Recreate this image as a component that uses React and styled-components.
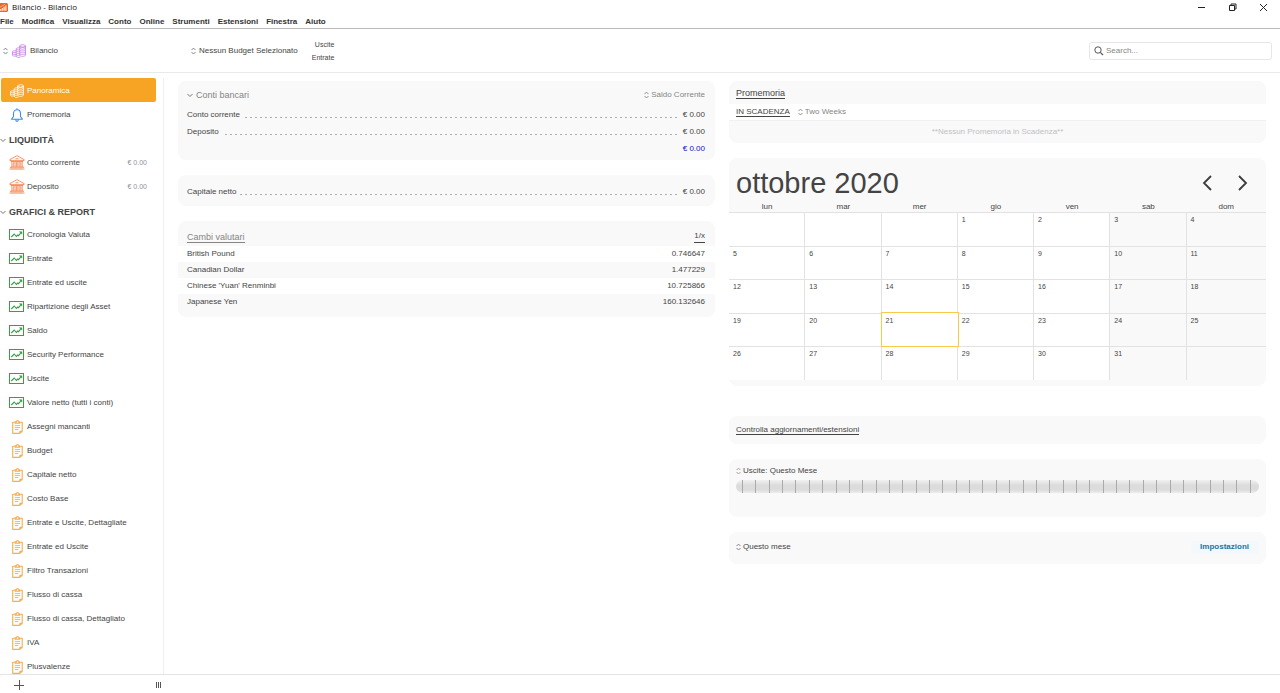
import React from "react";
import styled, { createGlobalStyle } from "styled-components";

const GlobalStyle = createGlobalStyle`
  *, *::before, *::after { box-sizing: border-box; }
  body {
    margin: 0;
    background: #fff;
    color: #444;
    font: 8px/16px "Liberation Sans", Arial, sans-serif;
  }
  button, input, select { font: inherit; color: inherit; }
  h1, h2 { margin: 0; font-weight: 400; }
  table { border-collapse: separate; border-spacing: 0; width: 100%; }
  td, th { padding: 0; font-weight: 400; }
`;

const Window = styled.div`
  display: flex;
  flex-direction: column;
  height: 100vh;
  overflow: hidden;
`;

const PlainButton = styled.button`
  display: flex;
  align-items: center;
  justify-content: center;
  padding: 0;
  border: 0;
  background: none;
  cursor: pointer;
`;

const TitleBar = styled.header`
  display: flex;
  align-items: center;
  justify-content: space-between;
  height: 14px;
  padding-right: 12px;
`;

const Title = styled.h1`
  display: flex;
  align-items: center;
  gap: 4px;
  color: #111;
  font: 500 8px/14px "Open Sans", "Noto Sans", sans-serif;
`;

const WindowButtons = styled.div`
  display: flex;
  gap: 22px;
`;

const MenuBar = styled.nav`
  display: flex;
  gap: 8px;
  height: 15px;
  border-bottom: 1px solid #b9b9b9;
`;

const MenuItem = styled(PlainButton)`
  color: #333;
  font-weight: 700;
  line-height: 15px;
`;

const Toolbar = styled.div`
  display: flex;
  align-items: center;
  height: 44px;
  padding: 1px 8px 0 3px;
  border-bottom: 1px solid #e9e9e9;
`;

const FileSlot = styled.div`
  width: 188px;
`;

const BudgetLegend = styled.div`
  display: flex;
  flex-direction: column;
  margin: 0 auto 0 14px;
  font-size: 7px;
  line-height: 13px;
  text-align: right;
`;

const SearchBox = styled.label`
  display: flex;
  align-items: center;
  gap: 2px;
  width: 183px;
  height: 18px;
  padding: 0 4px;
  border: 1px solid #e6e6e6;
  border-radius: 3px;
`;

const SearchInput = styled.input`
  flex: 1;
  min-width: 0;
  padding: 0;
  border: 0;
  outline: 0;
  background: none;
  &::placeholder { color: #858585; opacity: 1; }
`;

const PickerLabel = styled.label`
  display: flex;
  align-items: center;
  gap: ${(p) => p.$gap || 2}px;
  color: ${(p) => p.$color || "inherit"};
`;

const PickerSelect = styled.select`
  appearance: none;
  field-sizing: content;
  height: 16px;
  padding: 0;
  border: 0;
  background: none;
  line-height: 16px;
  cursor: pointer;
`;

const Body = styled.div`
  display: flex;
  flex: 1;
  min-height: 0;
`;

const Sidebar = styled.nav`
  flex: none;
  width: 164px;
  margin-top: 5px;
  overflow: hidden;
  border-right: 1px solid #efefef;
`;

const NavRow = styled.a`
  display: flex;
  align-items: center;
  gap: 2px;
  height: 24px;
  margin: 0 7px 0 1px;
  padding: 1px 9px 0 8px;
  border-radius: 2px;
  background: ${(p) => (p.$active ? "#f7a323" : "transparent")};
  color: ${(p) => (p.$active ? "#fff" : "#444")};
  text-decoration: none;
`;

const NavIcon = styled.span`
  display: flex;
  justify-content: center;
  width: 16px;
`;

const NavAmount = styled.span`
  margin-left: auto;
  color: #8f9399;
  font-size: 7px;
`;

const NavHeading = styled(PlainButton)`
  justify-content: flex-start;
  gap: 3px;
  width: 100%;
  height: 24px;
  padding: 4px 0 0;
  color: #444;
  font-size: 9px;
  font-weight: 700;
`;

const Main = styled.main`
  display: grid;
  grid-template-columns: 1fr 1fr;
  align-items: start;
  gap: 14px;
  flex: 1;
  min-width: 0;
  padding: 8px 14px 0;
  overflow: hidden;
`;

const Column = styled.div`
  display: flex;
  flex-direction: column;
  gap: 15px;
  min-width: 0;
`;

const Panel = styled.section`
  padding: ${(p) => p.$pad || "0"};
  border-radius: 8px;
  background: #f9f9f9;
  overflow: hidden;
`;

const CalendarPanel = styled(Panel)`
  margin-bottom: 15px;
`;

const PanelHeader = styled.div`
  display: flex;
  align-items: center;
  justify-content: space-between;
  height: ${(p) => p.$height || 25}px;
  padding: ${(p) => p.$pad || "3px 0 0"};
`;

const Collapse = styled(PlainButton)`
  gap: 3px;
  color: #858585;
  font-size: 9px;
`;

const LeaderRow = styled.div`
  display: flex;
  align-items: center;
  gap: 3px;
  height: 17px;
`;

const Leader = styled.span`
  flex: 1;
  height: 1px;
  margin-top: 6px;
  background: repeating-linear-gradient(to left, transparent 0 3px, #b0b0b0 3px 5px);
`;

const Total = styled.div`
  height: 17px;
  color: #1010d0;
  line-height: 18px;
  text-align: right;
`;

const TextLink = styled.a`
  padding-bottom: ${(p) => p.$drop || 0}px;
  border-bottom: 1px solid currentColor;
  color: ${(p) => p.$color || "#444"};
  font-size: ${(p) => p.$size || 8}px;
  line-height: ${(p) => (p.$size || 8) + 1}px;
  text-decoration: none;
`;

const RateRow = styled.tr`
  height: 16px;
  line-height: 16px;
  &:nth-child(odd) { background: #fff; }
  th { padding-left: 9px; text-align: left; }
  td { padding-right: 10px; text-align: right; }
`;

const DueRow = styled.div`
  display: flex;
  align-items: center;
  gap: 8px;
  height: 17px;
  padding: 0 7px;
  border-bottom: 1px solid #f1f1f1;
  background: #fff;
`;

const EmptyNote = styled.p`
  margin: 0;
  color: #c0c0c4;
  line-height: 22px;
  text-align: center;
`;

const CalendarHeader = styled.div`
  display: flex;
  align-items: center;
  justify-content: space-between;
  height: 44px;
  padding: 6px 17px 0 7px;
`;

const MonthTitle = styled.h2`
  color: #444;
  font-size: 29px;
  line-height: 36px;
`;

const MonthArrows = styled.div`
  display: flex;
  gap: 24px;
`;

const CalendarTable = styled.table`
  table-layout: fixed;
  th { height: 10px; line-height: 10px; }
  th:not(:last-child) { width: 14.2%; }
`;

const Week = styled.tr`
  height: 33px;
  &:nth-child(odd) { height: 34px; }
`;

const Day = styled.td`
  padding: 2px 4px;
  border: 0 solid ${(p) => (p.$today ? "#fbc94a" : "#e2e2e2")};
  border-width: 1px 1px 0 0;
  background: ${(p) => (p.$weekend ? "#f9f9f9" : "#fff")};
  font-size: 7px;
  line-height: 10px;
  vertical-align: top;
  &:last-child { border-right-width: 0; }
`;

const Today = styled(Day)`
  position: relative;
  z-index: 1;
  outline: 1px solid #fbc94a;
  border-color: #fff;
`;

const Gauge = styled.div`
  display: flex;
  justify-content: space-between;
  height: 13px;
  margin-top: 1px;
  padding: 0 8px 0 6px;
  border-radius: 7px;
  background: linear-gradient(#f1f1f1, #dcdcdc 40%, #dcdcdc 75%, #ececec);
`;

const Tick = styled.span`
  width: 1px;
  background: #aaa;
`;

const SettingsButton = styled(PlainButton)`
  height: 13px;
  padding: 0 9px;
  border-radius: 2px;
  background: #f2f8fb;
  color: #1a76a0;
  font-weight: 700;
`;

const Footer = styled.footer`
  display: flex;
  align-items: center;
  justify-content: space-between;
  flex: none;
  height: 19px;
  padding-top: 1px;
  border-top: 1px solid #e4e4e4;
`;

const FooterTools = styled.div`
  display: flex;
  justify-content: space-between;
  width: 162px;
  padding-left: 14px;
`;

const UpDown = ({ color = "#777" }) => (
  <svg width="5" height="8" viewBox="0 0 5 8" fill="none" stroke={color} strokeWidth="0.9" aria-hidden="true">
    <path d="M.5 3.100 2.500 1.100l2 2M.5 5l2 2 2-2" />
  </svg>
);

const ChevronDown = () => (
  <svg width="6" height="5" viewBox="0 0 6 5" fill="none" stroke="#777" aria-hidden="true">
    <path d="M.5 1 3 3.500 5.500 1" />
  </svg>
);

const AppLogo = () => (
  <svg width="8" height="9" viewBox="0 0 8 9" aria-hidden="true">
    <path d="M0 0h6.500A1.500 1.500 0 0 1 8 1.500v6A1.500 1.500 0 0 1 6.500 9H0z" fill="#f0642a" />
    <path d="M0 7.800V6h1.400v1.800zM1.800 7.800V5h1.300v2.800zM3.500 7.800v-4h1.300v4zM5.200 7.800V2.400h1.300v5.400z" fill="#ffe3d0" />
    <path d="M0 4.200 5 1.200" stroke="#ffc89b" strokeWidth=".7" />
  </svg>
);

const Coins = ({ color }) => (
  <svg width="14" height="14" viewBox="0 0 14 14" fill="none" stroke={color} strokeWidth="0.8" aria-hidden="true">
    <ellipse cx="10.600" cy="1.900" rx="2.900" ry="1.200" />
    <path d="M7.700 2c-.3 2 5.800 2 5.800 0M7.700 3.700c-.3 2 5.800 2 5.800 0M7.700 5.500c-.3 2 5.800 2 5.800 0M7.700 7.300c-.3 2 5.800 2 5.800 0M7.700 9.100c-.3 2 5.800 2 5.800 0M7.700 10.900c-.3 2 5.800 2 5.800 0M13.500 2v9M7.700 2v9" />
    <path d="M7.600 3.900c-1.800-.3-3.400.2-3.400 1s1.700 1.200 3.400.9M4.200 4.900v7.200c0 1.300 2.500 1.700 4.200.9M4.200 6.700c0 1 1.700 1.200 3.400.9M4.200 8.500c0 1 1.700 1.200 3.400.9M4.200 10.300c0 1 1.700 1.200 3.600.9" />
    <path d="M4.100 6.900C2 6.500.5 7 .5 7.700s1.700 1.100 3.600.8M.5 7.700v3.400c0 .9 1.700 1.200 3.600.9M.5 9.400c0 .9 1.700 1.200 3.600.9" />
  </svg>
);

const Bell = () => (
  <svg width="12" height="14" viewBox="0 0 12 14" fill="none" stroke="#3a8df2" strokeWidth="1.100" aria-hidden="true">
    <path d="M6 .2v1.300M2.500 8.200V5.600C2.500 3.200 4 1.700 6 1.700s3.500 1.500 3.500 3.900v2.600c0 1.200 1.700 1.600 1.900 3.100H.6c.2-1.500 1.900-1.900 1.900-3.100zM4.700 11.600c0 2.400 2.600 2.400 2.600 0" strokeLinejoin="round" />
  </svg>
);

const Bank = () => (
  <svg width="16" height="15" viewBox="0 0 16 15" fill="none" stroke="#f07c48" strokeWidth="0.8" aria-hidden="true">
    <path d="M.8 4.600 8 .7l7.200 3.900v.8H.8zM2 5.500v1h12v-1M1.700 11.900h12.600v1H1.700zM.5 14.100h15" strokeLinejoin="round" />
    <path d="M2.900 6.700v5M4.300 6.700v5M6 6.700v5M7.400 6.700v5M8.800 6.700v5M10.200 6.700v5M11.800 6.700v5M13.200 6.700v5" />
    <path d="M6.500 3.700h3" />
  </svg>
);

const Graph = () => (
  <svg width="16" height="11" viewBox="0 0 16 11" fill="none" stroke="#35a045" aria-hidden="true">
    <rect x=".5" y=".5" width="14" height="10" />
    <path d="m2.300 8 2.900-3 2.100 2.500 1.400-1.500.9.700 2.600-3.200" strokeWidth="1.100" />
    <path d="M9.800 2.400h3.400v3.200z" fill="#35a045" stroke="none" />
  </svg>
);

const Clipboard = () => (
  <svg width="11" height="14" viewBox="0 0 11 14" fill="none" stroke="#f6ad4f" strokeWidth="1.100" aria-hidden="true">
    <path d="M3.300 2.200H.7v11.200h7.200l2.300-2V2.200H7.700M3.300 3.300V1.900h1.200c0-1.800 2-1.800 2 0h1.200v1.400zM7.900 13.200v-1.800h2.200" strokeLinejoin="round" />
    <path d="M2.800 5.600h5.300M2.800 7.600h5.300M2.800 9.600h3.600" strokeWidth=".9" />
  </svg>
);

const SearchIcon = () => (
  <svg width="10" height="10" viewBox="0 0 10 10" fill="none" stroke="#555" aria-hidden="true">
    <circle cx="4" cy="4" r="3.200" />
    <path d="m6.300 6.300 2.700 2.700" strokeWidth="1.200" />
  </svg>
);

const MonthArrow = ({ d }) => (
  <svg width="12" height="16" viewBox="0 0 12 16" fill="none" stroke="#3c3c3c" strokeWidth="1.800" aria-hidden="true">
    <path d={d} />
  </svg>
);

function Picker({ label, value, color, iconColor, gap, icon }) {
  return (
    <PickerLabel $color={color} $gap={gap}>
      <UpDown color={iconColor || color} />
      {icon}
      <PickerSelect aria-label={label}>
        <option>{value}</option>
      </PickerSelect>
    </PickerLabel>
  );
}

function NavItem({ icon, label, amount, active }) {
  return (
    <NavRow href="#" $active={active} aria-current={active ? "page" : undefined}>
      <NavIcon>{icon}</NavIcon>
      {label}
      {amount && <NavAmount>{amount}</NavAmount>}
    </NavRow>
  );
}

function Amount({ name, value }) {
  return (
    <LeaderRow>
      <span>{name}</span>
      <Leader />
      <span>{value}</span>
    </LeaderRow>
  );
}

const menus = ["File", "Modifica", "Visualizza", "Conto", "Online", "Strumenti", "Estensioni", "Finestra", "Aiuto"];
const graphs = [
  "Cronologia Valuta", "Entrate", "Entrate ed uscite", "Ripartizione degli Asset", "Saldo",
  "Security Performance", "Uscite", "Valore netto (tutti i conti)",
];
const reports = [
  "Assegni mancanti", "Budget", "Capitale netto", "Costo Base", "Entrate e Uscite, Dettagliate",
  "Entrate ed Uscite", "Filtro Transazioni", "Flusso di cassa", "Flusso di cassa, Dettagliato",
  "IVA", "Plusvalenze",
];
const rates = [
  ["British Pound", "0.746647"],
  ["Canadian Dollar", "1.477229"],
  ["Chinese 'Yuan' Renminbi", "10.725866"],
  ["Japanese Yen", "160.132646"],
];
const weekdays = ["lun", "mar", "mer", "gio", "ven", "sab", "dom"];
const firstOffset = 3;
const monthLength = 31;
const today = 21;
const weeks = Array.from({ length: 5 }, (_, w) =>
  weekdays.map((_, d) => {
    const n = w * 7 + d - firstOffset + 1;
    return n > 0 && n <= monthLength ? n : null;
  })
);

export default function App() {
  return (
    <Window>
      <GlobalStyle />
      <TitleBar>
        <Title><AppLogo />Bilancio - Bilancio</Title>
        <WindowButtons>
          <PlainButton aria-label="Riduci a icona">
            <svg width="9" height="9" viewBox="0 0 9 9" stroke="#222"><path d="M1 4.500h7" /></svg>
          </PlainButton>
          <PlainButton aria-label="Ripristina">
            <svg width="9" height="9" viewBox="0 0 9 9" fill="none" stroke="#222"><path d="M1.500 2.500h5v5h-5zM3 2V1h5v5H7" /></svg>
          </PlainButton>
          <PlainButton aria-label="Chiudi">
            <svg width="9" height="9" viewBox="0 0 9 9" stroke="#222"><path d="m1 1 7 7M8 1 1 8" /></svg>
          </PlainButton>
        </WindowButtons>
      </TitleBar>
      <MenuBar>
        {menus.map((m) => <MenuItem key={m}>{m}</MenuItem>)}
      </MenuBar>
      <Toolbar>
        <FileSlot>
          <Picker label="File" value="Bilancio" gap={4} icon={<Coins color="#c77de6" />} />
        </FileSlot>
        <Picker label="Budget" value="Nessun Budget Selezionato" gap={3} />
        <BudgetLegend>
          <span>Uscite</span>
          <span>Entrate</span>
        </BudgetLegend>
        <SearchBox>
          <SearchIcon />
          <SearchInput type="search" placeholder="Search..." aria-label="Search" />
        </SearchBox>
      </Toolbar>

      <Body>
        <Sidebar>
          <NavItem active icon={<Coins color="#fff" />} label="Panoramica" />
          <NavItem icon={<Bell />} label="Promemoria" />
          <NavHeading><ChevronDown />LIQUIDITÀ</NavHeading>
          <NavItem icon={<Bank />} label="Conto corrente" amount="€ 0.00" />
          <NavItem icon={<Bank />} label="Deposito" amount="€ 0.00" />
          <NavHeading><ChevronDown />GRAFICI &amp; REPORT</NavHeading>
          {graphs.map((g) => <NavItem key={g} icon={<Graph />} label={g} />)}
          {reports.map((r) => <NavItem key={r} icon={<Clipboard />} label={r} />)}
        </Sidebar>

        <Main>
          <Column>
            <Panel $pad="0 10px 3px 9px">
              <PanelHeader>
                <Collapse><ChevronDown />Conti bancari</Collapse>
                <Picker label="Tipo di saldo" value="Saldo Corrente" color="#858585" />
              </PanelHeader>
              <Amount name="Conto corrente" value="€ 0.00" />
              <Amount name="Deposito" value="€ 0.00" />
              <Total>€ 0.00</Total>
            </Panel>

            <Panel $pad="8px 10px 6px 9px">
              <Amount name="Capitale netto" value="€ 0.00" />
            </Panel>

            <Panel $pad="0 0 7px">
              <PanelHeader $pad="7px 10px 0 9px">
                <TextLink href="#" $color="#858585" $size={9}>Cambi valutari</TextLink>
                <TextLink href="#" $drop={2}>1/x</TextLink>
              </PanelHeader>
              <table>
                <tbody>
                  {rates.map(([name, rate]) => (
                    <RateRow key={name}><th scope="row">{name}</th><td>{rate}</td></RateRow>
                  ))}
                </tbody>
              </table>
            </Panel>
          </Column>

          <Column>
            <Panel>
              <PanelHeader $height={23} $pad="1px 7px 0">
                <TextLink href="#" $size={9}>Promemoria</TextLink>
              </PanelHeader>
              <DueRow>
                <TextLink href="#">IN SCADENZA</TextLink>
                <Picker label="Periodo" value="Two Weeks" color="#858585" />
              </DueRow>
              <EmptyNote>**Nessun Promemoria in Scadenza**</EmptyNote>
            </Panel>

            <CalendarPanel $pad="0 0 6px">
              <CalendarHeader>
                <MonthTitle>ottobre 2020</MonthTitle>
                <MonthArrows>
                  <PlainButton aria-label="Mese precedente"><MonthArrow d="M10 1 3 8l7 7" /></PlainButton>
                  <PlainButton aria-label="Mese successivo"><MonthArrow d="m2 1 7 7-7 7" /></PlainButton>
                </MonthArrows>
              </CalendarHeader>
              <CalendarTable>
                <thead>
                  <tr>{weekdays.map((d) => <th key={d} scope="col">{d}</th>)}</tr>
                </thead>
                <tbody>
                  {weeks.map((week, w) => (
                    <Week key={w}>
                      {week.map((n, d) => {
                        const Cell = n === today ? Today : Day;
                        return <Cell key={d} $weekend={d > 4}>{n}</Cell>;
                      })}
                    </Week>
                  ))}
                </tbody>
              </CalendarTable>
            </CalendarPanel>

            <Panel $pad="6px 7px">
              <TextLink href="#">Controlla aggiornamenti/estensioni</TextLink>
            </Panel>

            <Panel $pad="4px 7px 24px">
              <Picker label="Categoria" value="Uscite: Questo Mese" iconColor="#999" />
              <Gauge>
                {Array.from({ length: 39 }, (_, i) => <Tick key={i} />)}
              </Gauge>
            </Panel>

            <Panel $pad="1px 8px 6px 7px">
              <PanelHeader>
                <Picker label="Intervallo" value="Questo mese" />
                <SettingsButton>Impostazioni</SettingsButton>
              </PanelHeader>
            </Panel>
          </Column>
        </Main>
      </Body>

      <Footer>
        <FooterTools>
          <PlainButton aria-label="Aggiungi">
            <svg width="10" height="10" viewBox="0 0 10 10" stroke="#555"><path d="M0 5.500h10M5.500 0v10" /></svg>
          </PlainButton>
          <PlainButton aria-label="Ridimensiona">
            <svg width="6" height="6" viewBox="0 0 6 6" stroke="#555"><path d="M.5 0v6M2.500 0v6M4.500 0v6" /></svg>
          </PlainButton>
        </FooterTools>
      </Footer>
    </Window>
  );
}
